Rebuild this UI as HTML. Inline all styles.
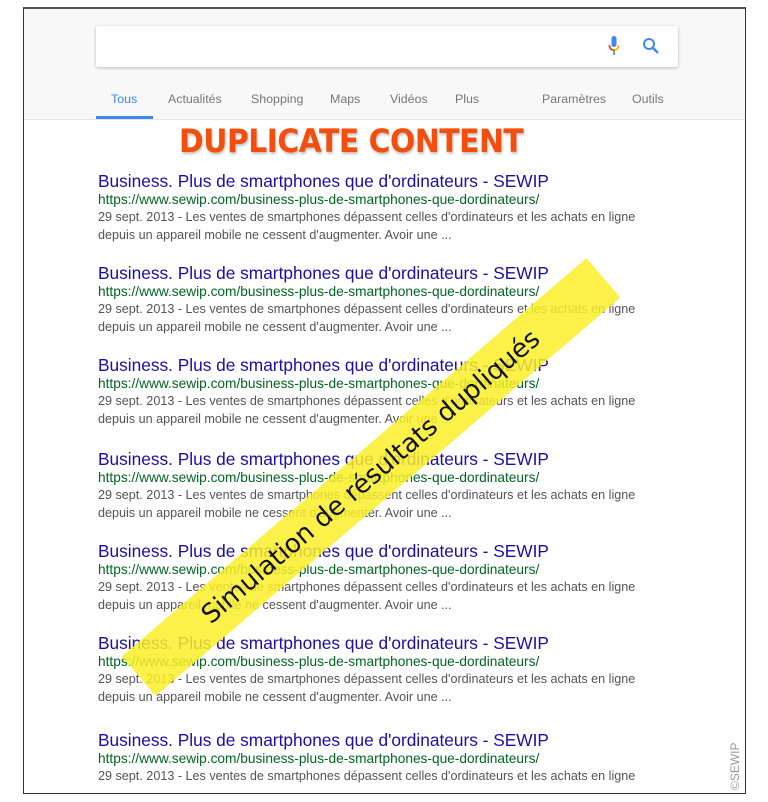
<!DOCTYPE html>
<html><head><meta charset="utf-8"><style>
*{margin:0;padding:0;box-sizing:border-box}
body{width:768px;height:802px;background:#fff;position:relative;overflow:hidden;font-family:"Liberation Sans",Arial,sans-serif}
.frame{position:absolute;left:23px;top:7px;width:723px;height:787px;border:1px solid #333;border-top:2px solid #555;overflow:hidden;background:#fff}
.hdr{position:absolute;left:0;top:0;width:100%;height:111px;background:#f8f8f8;border-bottom:1px solid #e6e6e6}
.sb{position:absolute;left:72px;top:17px;width:582px;height:41px;background:#fff;box-shadow:0 1px 3px rgba(0,0,0,.25);border-radius:2px}
.tab{position:absolute;top:83px;font-size:12.4px;color:#777}
.tous{color:#4285f4}
.ul{position:absolute;left:72px;top:107px;width:57px;height:3px;background:#4285f4}
.dup{position:absolute;left:155px;top:113px;font-family:"DejaVu Sans","Liberation Sans",sans-serif;font-weight:bold;font-size:32px;color:#f44d0c;letter-spacing:-0.5px;text-shadow:1px 2px 3px rgba(0,0,0,.25);transform:scaleX(.93);transform-origin:left}
.r{position:absolute;left:74px}
.t{font-size:17.3px;color:#1a0dab;height:19px;line-height:19px}
.u{font-size:13.7px;color:#006621;line-height:17px}
.s{font-size:12.6px;color:#545454;line-height:18px;white-space:nowrap}
.band{position:absolute;left:65px;top:451px;width:612px;height:52px;background:rgba(250,238,40,.85);transform:rotate(-40.6deg);font-family:"DejaVu Sans",sans-serif;font-size:26px;color:#111;text-align:center;line-height:52px}
.copy{position:absolute;left:728px;top:790px;transform:rotate(-90deg);transform-origin:left top;font-size:12px;color:#999;white-space:nowrap}
</style></head><body>
<div class="frame">
<div class="hdr">
<div class="sb">
<svg style="position:absolute;left:512px;top:10px" width="12" height="20" viewBox="0 0 12 20"><rect x="3.5" y="0" width="5" height="11" rx="2.5" fill="#4285f4"/><path d="M1.5 9 Q1.5 14 6 14" stroke="#ea4335" stroke-width="1.8" fill="none"/><path d="M10.5 9 Q10.5 14 6 14" stroke="#fbbc05" stroke-width="1.8" fill="none"/><rect x="5.2" y="14" width="1.6" height="5" fill="#34a853"/></svg>
<svg style="position:absolute;left:546px;top:11px" width="18" height="18" viewBox="0 0 18 18"><circle cx="7" cy="7" r="5" stroke="#4285f4" stroke-width="2" fill="none"/><path d="M10.5 10.5 L16 16" stroke="#4285f4" stroke-width="2.4"/></svg>
</div>
<div class="tab tous" style="left:87px">Tous</div>
<div class="tab" style="left:144px">Actualités</div>
<div class="tab" style="left:227px">Shopping</div>
<div class="tab" style="left:306px">Maps</div>
<div class="tab" style="left:366px">Vidéos</div>
<div class="tab" style="left:431px">Plus</div>
<div class="tab" style="left:518px">Paramètres</div>
<div class="tab" style="left:608px">Outils</div>
<div class="ul"></div>
</div>
<div class="dup">DUPLICATE CONTENT</div>

<div class="r" style="top:163px"><div class="t">Business. Plus de smartphones que d'ordinateurs - SEWIP</div><div class="u">https://www.sewip.com/business-plus-de-smartphones-que-dordinateurs/</div><div class="s">29 sept. 2013 - Les ventes de smartphones dépassent celles d'ordinateurs et les achats en ligne<br>depuis un appareil mobile ne cessent d'augmenter. Avoir une ...</div></div>
<div class="r" style="top:255px"><div class="t">Business. Plus de smartphones que d'ordinateurs - SEWIP</div><div class="u">https://www.sewip.com/business-plus-de-smartphones-que-dordinateurs/</div><div class="s">29 sept. 2013 - Les ventes de smartphones dépassent celles d'ordinateurs et les achats en ligne<br>depuis un appareil mobile ne cessent d'augmenter. Avoir une ...</div></div>
<div class="r" style="top:347px"><div class="t">Business. Plus de smartphones que d'ordinateurs - SEWIP</div><div class="u">https://www.sewip.com/business-plus-de-smartphones-que-dordinateurs/</div><div class="s">29 sept. 2013 - Les ventes de smartphones dépassent celles d'ordinateurs et les achats en ligne<br>depuis un appareil mobile ne cessent d'augmenter. Avoir une ...</div></div>
<div class="r" style="top:441px"><div class="t">Business. Plus de smartphones que d'ordinateurs - SEWIP</div><div class="u">https://www.sewip.com/business-plus-de-smartphones-que-dordinateurs/</div><div class="s">29 sept. 2013 - Les ventes de smartphones dépassent celles d'ordinateurs et les achats en ligne<br>depuis un appareil mobile ne cessent d'augmenter. Avoir une ...</div></div>
<div class="r" style="top:533px"><div class="t">Business. Plus de smartphones que d'ordinateurs - SEWIP</div><div class="u">https://www.sewip.com/business-plus-de-smartphones-que-dordinateurs/</div><div class="s">29 sept. 2013 - Les ventes de smartphones dépassent celles d'ordinateurs et les achats en ligne<br>depuis un appareil mobile ne cessent d'augmenter. Avoir une ...</div></div>
<div class="r" style="top:625px"><div class="t">Business. Plus de smartphones que d'ordinateurs - SEWIP</div><div class="u">https://www.sewip.com/business-plus-de-smartphones-que-dordinateurs/</div><div class="s">29 sept. 2013 - Les ventes de smartphones dépassent celles d'ordinateurs et les achats en ligne<br>depuis un appareil mobile ne cessent d'augmenter. Avoir une ...</div></div>
<div class="r" style="top:722px"><div class="t">Business. Plus de smartphones que d'ordinateurs - SEWIP</div><div class="u">https://www.sewip.com/business-plus-de-smartphones-que-dordinateurs/</div><div class="s">29 sept. 2013 - Les ventes de smartphones dépassent celles d'ordinateurs et les achats en ligne</div></div>
</div>
<div class="band">Simulation de résultats dupliqués</div>
<div class="copy">©SEWIP</div>
</body></html>
